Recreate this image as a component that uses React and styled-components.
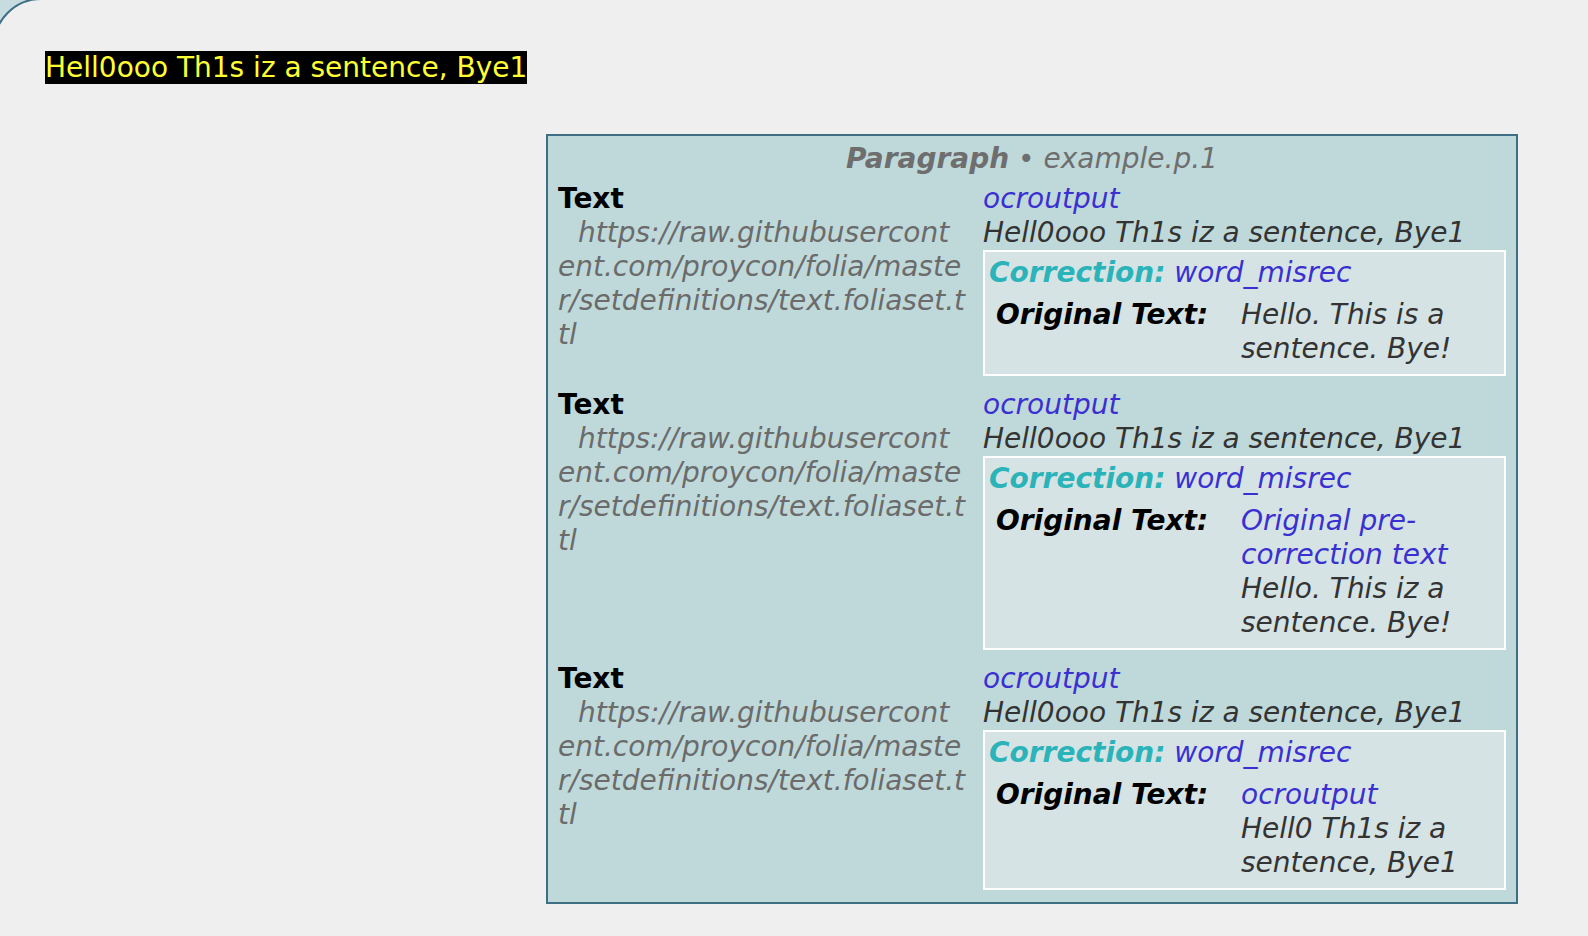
import styled, { createGlobalStyle } from "styled-components";

const rows = [
  {
    set: "https://raw.githubusercontent.com/proycon/folia/master/setdefinitions/text.foliaset.ttl",
    cls: "ocroutput",
    text: "Hell0ooo Th1s iz a sentence, Bye1",
    correction: "word_misrec",
    original: { cls: null, text: "Hello. This is a sentence. Bye!" },
  },
  {
    set: "https://raw.githubusercontent.com/proycon/folia/master/setdefinitions/text.foliaset.ttl",
    cls: "ocroutput",
    text: "Hell0ooo Th1s iz a sentence, Bye1",
    correction: "word_misrec",
    original: { cls: "Original pre-correction text", text: "Hello. This iz a sentence. Bye!" },
  },
  {
    set: "https://raw.githubusercontent.com/proycon/folia/master/setdefinitions/text.foliaset.ttl",
    cls: "ocroutput",
    text: "Hell0ooo Th1s iz a sentence, Bye1",
    correction: "word_misrec",
    original: { cls: "ocroutput", text: "Hell0 Th1s iz a sentence, Bye1" },
  },
];

const App = () => (
  <>
    <GlobalStyle />
    <Page>
      <Sentence>
        <Highlight>Hell0ooo Th1s iz a sentence, Bye1</Highlight>
      </Sentence>
      <ParagraphBox>
        <Header>
          <HeaderType>Paragraph</HeaderType> • example.p.1
        </Header>
        <Rows>
          {rows.map((row, i) => (
            <Row key={i}>
              <SetCell>
                <Label>Text</Label>
                <SetUrl>{row.set}</SetUrl>
              </SetCell>
              <ValueCell>
                <ClassName>{row.cls}</ClassName>
                <TextValue>{row.text}</TextValue>
                <CorrectionBox>
                  <CorrectionTitle>
                    <CorrectionLabel>Correction:</CorrectionLabel>{" "}
                    <ClassName as="span">{row.correction}</ClassName>
                  </CorrectionTitle>
                  <OriginalRow>
                    <OriginalLabel>Original Text:</OriginalLabel>
                    <div>
                      {row.original.cls && <ClassName>{row.original.cls}</ClassName>}
                      <TextValue>{row.original.text}</TextValue>
                    </div>
                  </OriginalRow>
                </CorrectionBox>
              </ValueCell>
            </Row>
          ))}
        </Rows>
      </ParagraphBox>
    </Page>
  </>
);

const GlobalStyle = createGlobalStyle`
  html, body {
    margin: 0;
    background: #c7dce1;
    overflow: hidden;
  }
  body {
    font-family: "DejaVu Sans", Verdana, sans-serif;
    font-size: 28px;
    line-height: 34px;
    color: #000;
  }
`;

const Page = styled.div`
  box-sizing: border-box;
  min-height: calc(100vh + 20px);
  margin: -2px -7px 0 -7px;
  padding: 51px 0 0 50px;
  background: #efefef;
  border: 2px solid #3e6f83;
  border-top-left-radius: 48px;
`;

const Sentence = styled.div`
  line-height: 34px;
`;

const Highlight = styled.span`
  background: #000;
  color: #ffff33;
`;

const ParagraphBox = styled.div`
  box-sizing: border-box;
  width: 972px;
  margin: 49px 0 0 501px;
  padding: 6px 10px 12px 10px;
  background: #bfd9da;
  border: 2px solid #3e6f83;
`;

const Header = styled.div`
  text-align: center;
  font-style: italic;
  color: #6e6e6e;
  margin-bottom: 6px;
`;

const HeaderType = styled.span`
  font-weight: bold;
`;

const Rows = styled.div`
  display: flex;
  flex-direction: column;
  gap: 12px;
`;

const Row = styled.div`
  display: grid;
  grid-template-columns: 415px 1fr;
  column-gap: 10px;
  align-items: start;
`;

const SetCell = styled.div`
  min-width: 0;
`;

const Label = styled.div`
  font-weight: bold;
`;

const SetUrl = styled.div`
  width: 408px;
  font-style: italic;
  color: #6b6b6b;
  text-indent: 20px;
  word-break: break-all;
  line-break: anywhere;
`;

const ValueCell = styled.div`
  min-width: 0;
`;

const ClassName = styled.div`
  font-style: italic;
  color: #3a30d2;
`;

const TextValue = styled.div`
  font-style: italic;
  color: #333;
`;

const CorrectionBox = styled.div`
  background: #d5e3e4;
  border: 2px solid #fff;
  padding: 4px 4px 8px 4px;
`;

const CorrectionTitle = styled.div``;

const CorrectionLabel = styled.span`
  font-weight: bold;
  font-style: italic;
  color: #2ab3b8;
`;

const OriginalRow = styled.div`
  display: grid;
  grid-template-columns: 245px 1fr;
  margin: 8px 0 0 7px;
`;

const OriginalLabel = styled.div`
  font-weight: bold;
  font-style: italic;
`;

export default App;
